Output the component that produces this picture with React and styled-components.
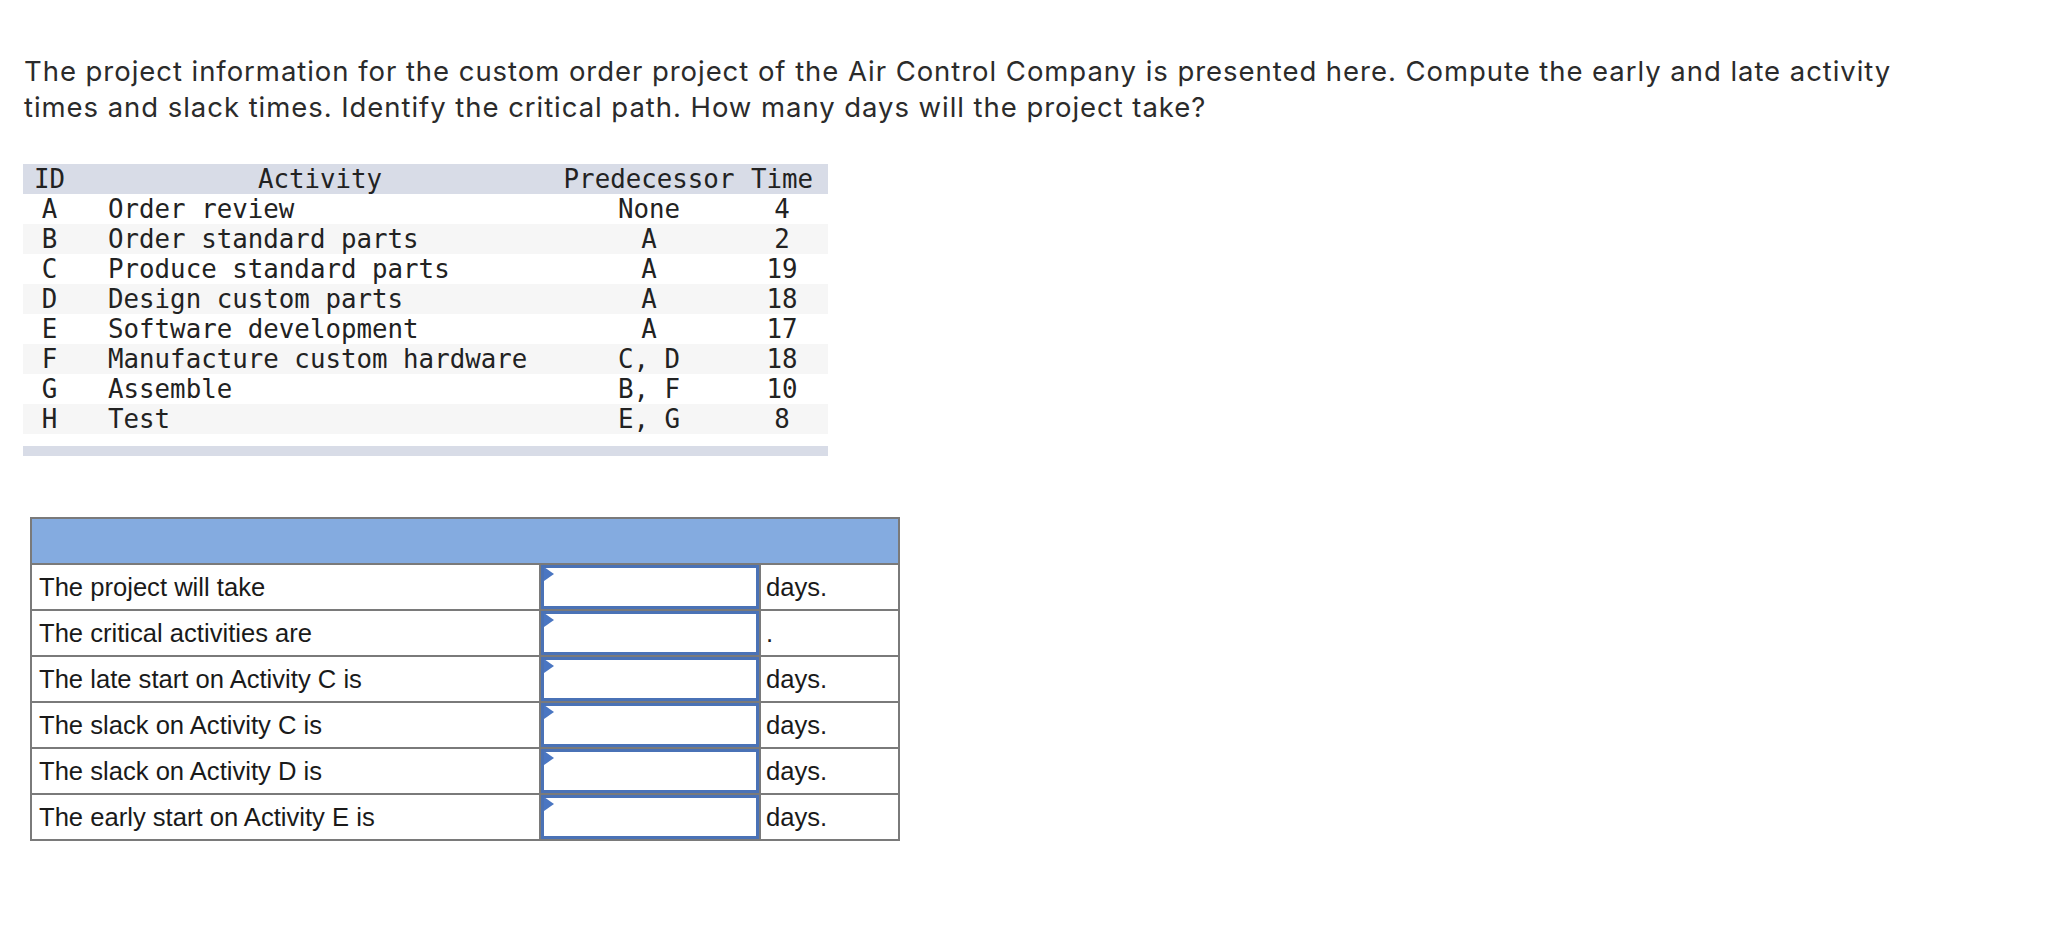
import styled, { createGlobalStyle } from 'styled-components';

const GlobalStyle = createGlobalStyle`
  body {
    margin: 0;
    background: #ffffff;
    font-family: "Liberation Sans", Arial, sans-serif;
  }
`;

const Page = styled.div`
  padding: 54px 24px 40px 23px;
`;

const Question = styled.p`
  margin: 0 0 39px 1px;
  font-family: Inter, "Open Sans", sans-serif;
  font-size: 27.5px;
  letter-spacing: 0.95px;
  line-height: 35.5px;
  color: #2b2b2b;
  white-space: nowrap;
`;

const DataTable = styled.div`
  width: 805px;
  font-family: "DejaVu Sans Mono", "Liberation Mono", monospace;
  font-size: 25.8px;
  color: #222;
`;

const DataRow = styled.div`
  display: grid;
  grid-template-columns: 53px 480px 186px 80px 6px;
  height: 30px;
  line-height: 30px;
  background: ${p => (p.$header ? '#d8dce7' : p.$shade ? '#f6f6f6' : '#ffffff')};
`;

const Cell = styled.div`
  white-space: nowrap;
  text-align: ${p => p.$align || 'center'};
  padding-left: ${p => p.$pad || 0}px;
`;

const FootBar = styled.div`
  height: 10px;
  margin-top: 12px;
  background: #d8dce7;
`;

const AnswerTable = styled.div`
  margin: 61px 0 0 7px;
  width: 866px;
  border: 2px solid #7a7a7a;
  border-bottom: none;
  font-size: 25.6px;
  color: #1a1a1a;
`;

const AnswerHead = styled.div`
  height: 44px;
  background: #84abe0;
  border-bottom: 2px solid #7a7a7a;
`;

const AnswerRow = styled.div`
  display: grid;
  grid-template-columns: 509px 220px 1fr;
  height: 44px;
  border-bottom: 2px solid #7a7a7a;
`;

const Label = styled.div`
  display: flex;
  align-items: center;
  padding-left: 7px;
  border-right: 2px solid #7a7a7a;
`;

const InputCell = styled.div`
  position: relative;
  border-right: 2px solid #7a7a7a;
`;

const Input = styled.input`
  box-sizing: border-box;
  width: 100%;
  height: 100%;
  margin: 0;
  border: 3px solid #4a72b6;
  background: #fff;
  outline: none;
`;

const Marker = styled.span`
  position: absolute;
  left: 3px;
  top: 2px;
  width: 0;
  height: 0;
  border-top: 7px solid transparent;
  border-bottom: 7px solid transparent;
  border-left: 10px solid #4a76c2;
`;

const Unit = styled.div`
  display: flex;
  align-items: center;
  padding-left: 5px;
`;

const rows = [
  ['A', 'Order review', 'None', '4'],
  ['B', 'Order standard parts', 'A', '2'],
  ['C', 'Produce standard parts', 'A', '19'],
  ['D', 'Design custom parts', 'A', '18'],
  ['E', 'Software development', 'A', '17'],
  ['F', 'Manufacture custom hardware', 'C, D', '18'],
  ['G', 'Assemble', 'B, F', '10'],
  ['H', 'Test', 'E, G', '8'],
];

const answers = [
  ['The project will take', 'days.'],
  ['The critical activities are', '.'],
  ['The late start on Activity C is', 'days.'],
  ['The slack on Activity C is', 'days.'],
  ['The slack on Activity D is', 'days.'],
  ['The early start on Activity E is', 'days.'],
];

export default function App() {
  return (
    <>
      <GlobalStyle />
      <Page>
        <Question>
          The project information for the custom order project of the Air Control Company is presented here. Compute the early and late activity
          <br />
          times and slack times. Identify the critical path. How many days will the project take?
        </Question>

        <DataTable>
          <DataRow $header>
            <Cell>ID</Cell>
            <Cell $pad={8}>Activity</Cell>
            <Cell>Predecessor</Cell>
            <Cell>Time</Cell>
            <Cell />
          </DataRow>
          {rows.map(([id, name, pred, time], i) => (
            <DataRow key={id} $shade={i % 2 === 1}>
              <Cell>{id}</Cell>
              <Cell $align="left" $pad={32}>{name}</Cell>
              <Cell>{pred}</Cell>
              <Cell>{time}</Cell>
              <Cell />
            </DataRow>
          ))}
          <FootBar />
        </DataTable>

        <AnswerTable>
          <AnswerHead />
          {answers.map(([label, unit]) => (
            <AnswerRow key={label}>
              <Label>{label}</Label>
              <InputCell>
                <Input type="text" />
                <Marker />
              </InputCell>
              <Unit>{unit}</Unit>
            </AnswerRow>
          ))}
        </AnswerTable>
      </Page>
    </>
  );
}
